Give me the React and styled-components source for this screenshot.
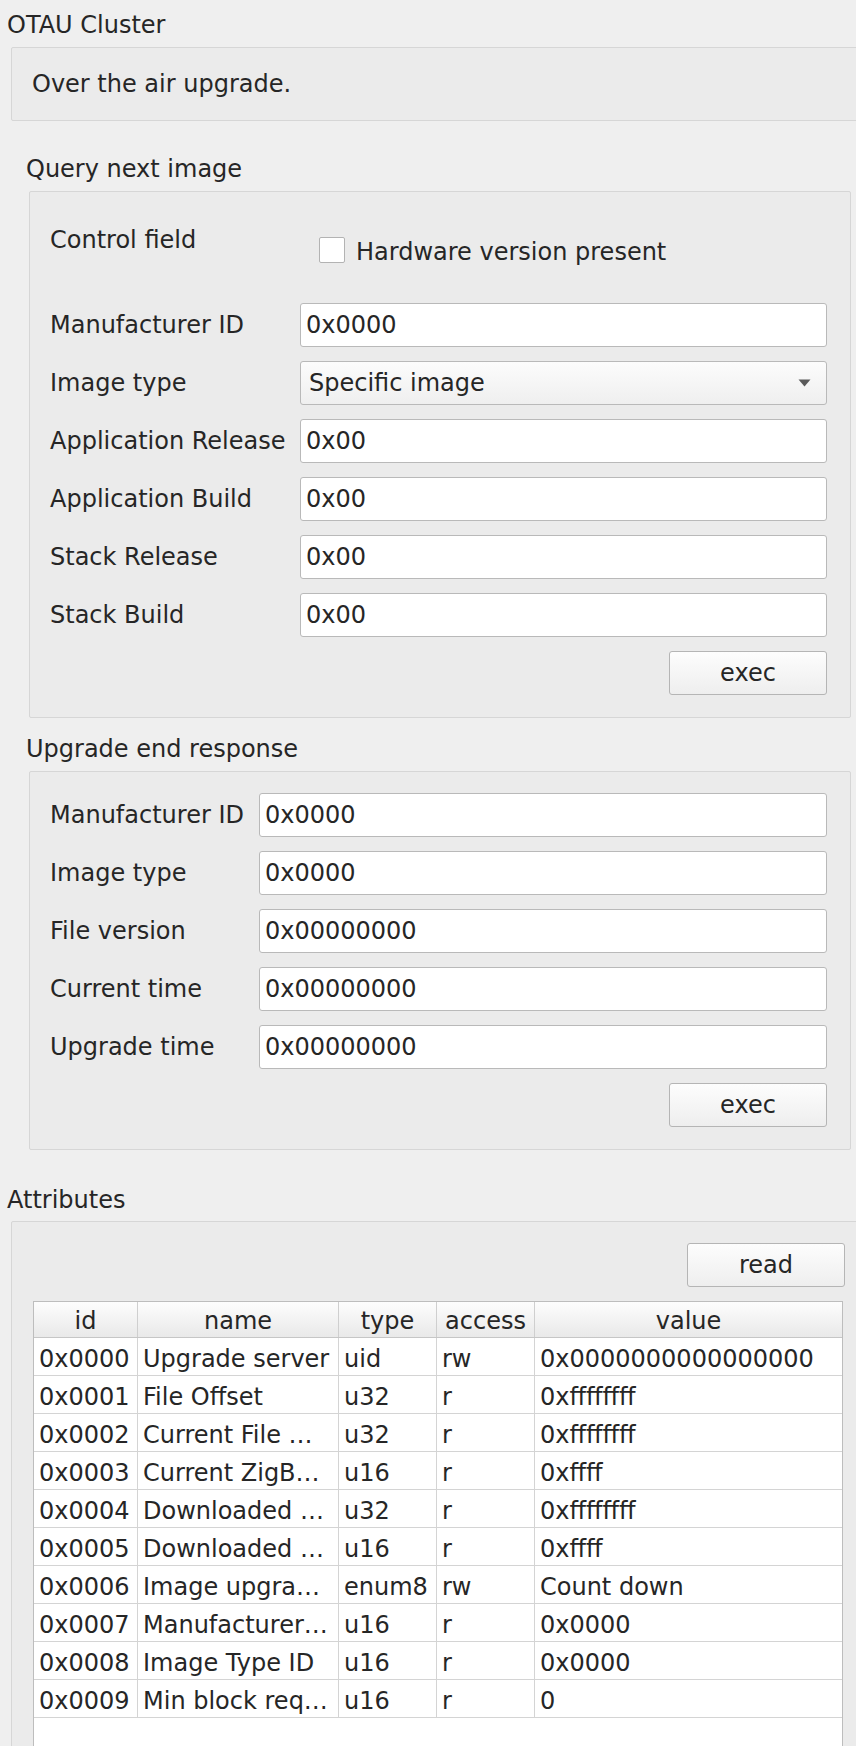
import React from "react";
import styled, { createGlobalStyle } from "styled-components";

const GlobalStyle = createGlobalStyle`
  html, body {
    margin: 0;
    padding: 0;
    background: #efefef;
    overflow: hidden;
  }
  body {
    font-family: "DejaVu Sans", "Noto Sans", sans-serif;
    font-size: 24px;
    color: #262626;
  }
  * { box-sizing: border-box; }
`;

const Page = styled.div`
  width: 876px;
  padding: 11px 0 0 7px;
  display: flex;
  flex-direction: column;
`;

const SectionTitle = styled.div`
  height: 28px;
  line-height: 28px;
  margin-top: ${(p) => p.$top || 0}px;
  white-space: nowrap;
`;

const DescBox = styled.div`
  margin: 8px 0 0 4px;
  width: 854px;
  border: 1px solid #d6d6d6;
  border-radius: 2px;
  background: #ebebeb;
  padding: 22px 20px;
  line-height: 28px;
`;

const Commands = styled.div`
  margin: 34px 0 0 19px;
  width: 825px;
  display: flex;
  flex-direction: column;
`;

const GroupBox = styled.div`
  margin: 8px 0 0 3px;
  width: 822px;
  border: 1px solid #d6d6d6;
  border-radius: 2px;
  background: #ebebeb;
  padding: ${(p) => p.$padTop}px 23px 22px 20px;
  display: flex;
  flex-direction: column;
`;

const Form = styled.div`
  display: grid;
  grid-template-columns: ${(p) => p.$labelWidth}px 1fr;
  row-gap: 14px;
`;

const Label = styled.div`
  line-height: 28px;
  align-self: ${(p) => (p.$top ? "start" : "center")};
  white-space: nowrap;
`;

const CheckArea = styled.div`
  height: 63px;
  padding: 11px 0 0 19px;
  display: flex;
  align-items: flex-start;
`;

const CheckBox = styled.span`
  width: 26px;
  height: 26px;
  border: 1px solid #b3b3b3;
  border-radius: 2px;
  background: #fff;
  flex: none;
`;

const CheckText = styled.span`
  margin: 1px 0 0 11px;
  line-height: 28px;
  white-space: nowrap;
`;

const LineEdit = styled.div`
  height: 44px;
  border: 1px solid #b9b9b9;
  border-radius: 3px;
  background: #fff;
  padding: 0 5px;
  display: flex;
  align-items: center;
  line-height: 28px;
  white-space: nowrap;
`;

const Combo = styled.div`
  height: 44px;
  border: 1px solid #b9b9b9;
  border-radius: 3px;
  background: linear-gradient(#fcfcfc, #efefef);
  padding: 0 15px 0 8px;
  display: flex;
  align-items: center;
  justify-content: space-between;
  line-height: 28px;
`;

const ButtonRow = styled.div`
  margin-top: 14px;
  display: flex;
  justify-content: flex-end;
`;

const Button = styled.div`
  width: 158px;
  height: 44px;
  border: 1px solid #b5b5b5;
  border-radius: 3px;
  background: linear-gradient(#fdfdfd, #eeeeee);
  display: flex;
  align-items: center;
  justify-content: center;
  line-height: 28px;
`;

const AttrBox = styled.div`
  margin: 7px 0 0 4px;
  width: 854px;
  height: 560px;
  border: 1px solid #d6d6d6;
  border-radius: 2px;
  background: #ebebeb;
  padding: 21px 0 0 21px;
`;

const AttrInner = styled.div`
  width: 812px;
  display: flex;
  flex-direction: column;
`;

const ReadRow = styled.div`
  display: flex;
  justify-content: flex-end;
`;

const TableView = styled.div`
  margin-top: 14px;
  width: 810px;
  height: 480px;
  border: 1px solid #bdbdbd;
  background: #fff;
`;

const COLS = "104px 201px 98px 98px 307px";

const HeaderRow = styled.div`
  display: grid;
  grid-template-columns: ${COLS};
  height: 36px;
  background: linear-gradient(#fdfdfd, #e9e9e9);
  border-bottom: 1px solid #c6c6c6;
`;

const HeaderCell = styled.div`
  display: flex;
  align-items: center;
  justify-content: center;
  padding-top: 2px;
  line-height: 28px;
  border-right: ${(p) => (p.$last ? "none" : "1px solid #cfcfcf")};
`;

const DataRow = styled.div`
  display: grid;
  grid-template-columns: ${COLS};
  height: 38px;
`;

const Cell = styled.div`
  display: flex;
  align-items: center;
  padding: 4px 0 0 5px;
  line-height: 28px;
  white-space: nowrap;
  overflow: hidden;
  border-bottom: 1px solid #d4d4d4;
  border-right: ${(p) => (p.$last ? "none" : "1px solid #d4d4d4")};
`;

const Arrow = () => (
  <svg width="13" height="8" viewBox="0 0 13 8">
    <path d="M0.5 0.5 H12.5 L6.5 7.5 Z" fill="#5a5a5a" />
  </svg>
);

const queryFields = [
  ["Manufacturer ID", "0x0000"],
  ["Image type", null],
  ["Application Release", "0x00"],
  ["Application Build", "0x00"],
  ["Stack Release", "0x00"],
  ["Stack Build", "0x00"],
];

const endFields = [
  ["Manufacturer ID", "0x0000"],
  ["Image type", "0x0000"],
  ["File version", "0x00000000"],
  ["Current time", "0x00000000"],
  ["Upgrade time", "0x00000000"],
];

const headers = ["id", "name", "type", "access", "value"];

const rows = [
  ["0x0000", "Upgrade server", "uid", "rw", "0x0000000000000000"],
  ["0x0001", "File Offset", "u32", "r", "0xffffffff"],
  ["0x0002", "Current File …", "u32", "r", "0xffffffff"],
  ["0x0003", "Current ZigB…", "u16", "r", "0xffff"],
  ["0x0004", "Downloaded …", "u32", "r", "0xffffffff"],
  ["0x0005", "Downloaded …", "u16", "r", "0xffff"],
  ["0x0006", "Image upgra…", "enum8", "rw", "Count down"],
  ["0x0007", "Manufacturer…", "u16", "r", "0x0000"],
  ["0x0008", "Image Type ID", "u16", "r", "0x0000"],
  ["0x0009", "Min block req…", "u16", "r", "0"],
];

export default function App() {
  return (
    <>
      <GlobalStyle />
      <Page>
        <SectionTitle>OTAU Cluster</SectionTitle>
        <DescBox>Over the air upgrade.</DescBox>

        <Commands>
          <SectionTitle>Query next image</SectionTitle>
          <GroupBox $padTop={34}>
            <Form $labelWidth={250}>
              <Label $top>Control field</Label>
              <CheckArea>
                <CheckBox />
                <CheckText>Hardware version present</CheckText>
              </CheckArea>
              {queryFields.map(([label, value]) => (
                <React.Fragment key={label}>
                  <Label>{label}</Label>
                  {value === null ? (
                    <Combo>
                      <span>Specific image</span>
                      <Arrow />
                    </Combo>
                  ) : (
                    <LineEdit>{value}</LineEdit>
                  )}
                </React.Fragment>
              ))}
            </Form>
            <ButtonRow>
              <Button>exec</Button>
            </ButtonRow>
          </GroupBox>

          <SectionTitle $top={17}>Upgrade end response</SectionTitle>
          <GroupBox $padTop={21}>
            <Form $labelWidth={209}>
              {endFields.map(([label, value]) => (
                <React.Fragment key={label}>
                  <Label>{label}</Label>
                  <LineEdit>{value}</LineEdit>
                </React.Fragment>
              ))}
            </Form>
            <ButtonRow>
              <Button>exec</Button>
            </ButtonRow>
          </GroupBox>
        </Commands>

        <SectionTitle $top={36}>Attributes</SectionTitle>
        <AttrBox>
          <AttrInner>
            <ReadRow>
              <Button>read</Button>
            </ReadRow>
            <TableView>
              <HeaderRow>
                {headers.map((h, i) => (
                  <HeaderCell key={h} $last={i === headers.length - 1}>
                    {h}
                  </HeaderCell>
                ))}
              </HeaderRow>
              {rows.map((r) => (
                <DataRow key={r[0]}>
                  {r.map((c, i) => (
                    <Cell key={i} $last={i === r.length - 1}>
                      {c}
                    </Cell>
                  ))}
                </DataRow>
              ))}
            </TableView>
          </AttrInner>
        </AttrBox>
      </Page>
    </>
  );
}
